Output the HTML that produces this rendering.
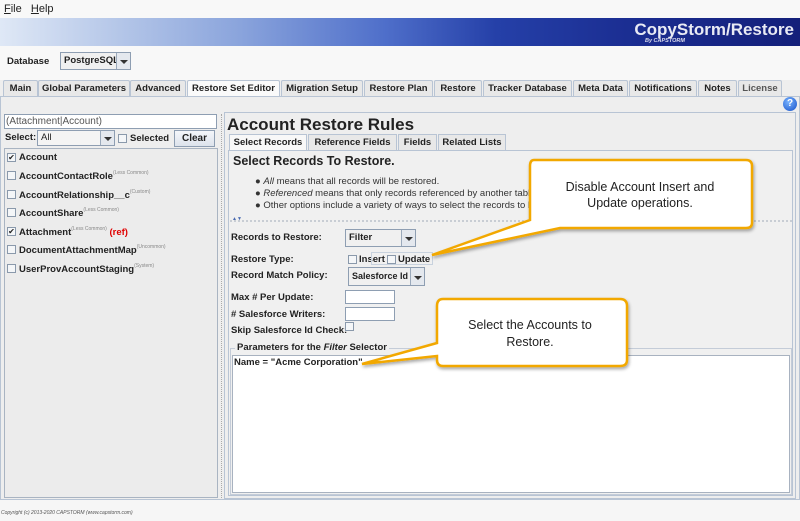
<!DOCTYPE html>
<html><head><meta charset="utf-8"><style>
*{box-sizing:border-box;margin:0;padding:0}
body{width:800px;height:521px;overflow:hidden;background:#eeeeee;font-family:"Liberation Sans",sans-serif;font-size:11px;color:#222;position:relative}
.a{position:absolute;white-space:nowrap}
.b{font-weight:bold}
.tab{position:absolute;top:80px;height:16px;border:1px solid #b8c4d4;border-bottom:none;background:#e8e8e8;font-weight:bold;font-size:9.5px;text-align:center;line-height:15px;border-radius:2px 2px 0 0;white-space:nowrap;overflow:hidden}
.st{position:absolute;top:134px;height:16px;border:1px solid #b8c4d4;border-bottom:none;background:#e8e8e8;font-weight:bold;font-size:9.5px;text-align:center;line-height:15px;white-space:nowrap}
.cb{position:absolute;width:9px;height:9px;border:1px solid #8a99ab;background:#f4f6f8}
.combo{position:absolute;border:1px solid #8e9eb2;background:#f0f0f0;font-weight:bold;font-size:9.5px;padding-left:3px;white-space:nowrap;overflow:hidden}
.arr{position:absolute;right:0;top:0;bottom:0;width:14px;border-left:1px solid #9aa9bb;background:#e4e8ee}
.arr:after{content:"";position:absolute;left:3px;top:45%;border:4px solid transparent;border-top:4px solid #333}
.li{position:absolute;left:19px;font-weight:bold;font-size:9.5px;white-space:nowrap}
.li sup{font-size:5px;font-weight:normal;color:#888;vertical-align:5px}
.fld{position:absolute;width:50px;height:14px;border:1px solid #8e9eb2;background:#fff}
.lb{position:absolute;font-weight:bold;font-size:9.5px;white-space:nowrap}
</style></head><body>
<div class="a" style="left:0;top:0;width:800px;height:18px;background:#f8f8f8"></div>
<div class="a" style="left:4px;top:3px;font-size:11px"><u>F</u>ile &nbsp;&nbsp;<u>H</u>elp</div>
<div class="a" style="left:0;top:18px;width:800px;height:28px;background:linear-gradient(90deg,#dfe8f6 0%,#b4c6e8 15%,#8aa4dc 30%,#4f6fca 48%,#2540a8 62%,#1a2c90 80%,#14207a 100%)"></div>
<div class="a b" style="right:6px;top:20px;font-size:17px;color:#e8eaf4">CopyStorm/Restore</div>
<div class="a b" style="left:645px;top:38px;font-size:5.5px;color:#dde;font-style:italic">By CAPSTORM</div>
<div class="a" style="left:0;top:46px;width:800px;height:34px;background:#f8f8f8"></div>
<div class="lb" style="left:7px;top:56px">Database</div>
<div class="combo" style="left:60px;top:52px;width:71px;height:18px;line-height:16px">PostgreSQL<div class="arr"></div></div>
<div class="tab" style="left:3px;width:35px">Main</div>
<div class="tab" style="left:38px;width:92px">Global Parameters</div>
<div class="tab" style="left:130px;width:56px">Advanced</div>
<div class="tab" style="left:187px;width:93px;background:#fafafa">Restore Set Editor</div>
<div class="tab" style="left:281px;width:82px">Migration Setup</div>
<div class="tab" style="left:364px;width:69px">Restore Plan</div>
<div class="tab" style="left:434px;width:48px">Restore</div>
<div class="tab" style="left:483px;width:89px">Tracker Database</div>
<div class="tab" style="left:573px;width:55px">Meta Data</div>
<div class="tab" style="left:629px;width:68px">Notifications</div>
<div class="tab" style="left:698px;width:39px">Notes</div>
<div class="tab" style="left:738px;width:44px;color:#555">License</div>
<div class="a" style="left:0;top:96px;width:800px;height:404px;border:1px solid #b8c4d4;background:#eeeeee"></div>
<div class="a" style="left:783px;top:97px;width:14px;height:14px;border-radius:50%;background:radial-gradient(circle at 40% 35%,#7ab4ff,#1550c8);color:#fff;font-size:10px;font-weight:bold;text-align:center;line-height:14px">?</div>
<!-- left panel -->
<div class="a" style="left:4px;top:114px;width:213px;height:15px;border:1px solid #8e9eb2;background:#fff;font-size:10px;color:#555;padding-left:1px;line-height:13px">(Attachment|Account)</div>
<div class="lb" style="left:5px;top:132px">Select:</div>
<div class="combo" style="left:37px;top:130px;width:78px;height:16px;font-weight:normal;background:#f4f4f4;line-height:14px">All<div class="arr"></div></div>
<div class="cb" style="left:118px;top:134px"></div>
<div class="lb" style="left:130px;top:133px">Selected</div>
<div class="a b" style="left:174px;top:130px;width:41px;height:17px;border:1px solid #8e9eb2;background:linear-gradient(#f4f6fa,#dde3ec);text-align:center;line-height:15px;font-size:10px">Clear</div>
<div class="a" style="left:4px;top:148px;width:214px;height:350px;border:1px solid #a9b4c2;background:#ececec"></div>
<div class="cb" style="left:7px;top:153px;font-size:8px;line-height:7px;text-align:center">✔</div><div class="li" style="top:152px">Account</div>
<div class="cb" style="left:7px;top:171px"></div><div class="li" style="top:170px">AccountContactRole<sup>(Less Common)</sup></div>
<div class="cb" style="left:7px;top:190px"></div><div class="li" style="top:189px">AccountRelationship__c<sup>(Custom)</sup></div>
<div class="cb" style="left:7px;top:208px"></div><div class="li" style="top:207px">AccountShare<sup>(Less Common)</sup></div>
<div class="cb" style="left:7px;top:227px;font-size:8px;line-height:7px;text-align:center">✔</div><div class="li" style="top:226px">Attachment<sup>(Less Common)</sup> <span style="color:#e00000">(ref)</span></div>
<div class="cb" style="left:7px;top:245px"></div><div class="li" style="top:244px">DocumentAttachmentMap<sup>(Uncommon)</sup></div>
<div class="cb" style="left:7px;top:264px"></div><div class="li" style="top:263px">UserProvAccountStaging<sup>(System)</sup></div>
<div class="a" style="left:221px;top:114px;width:1px;height:384px;border-left:1px dotted #aaa"></div>
<!-- right panel -->
<div class="a" style="left:224px;top:112px;width:572px;height:387px;border:1px solid #b8c4d4"></div>
<div class="a b" style="left:227px;top:115px;font-size:17px">Account Restore Rules</div>
<div class="st" style="left:229px;width:78px;background:#f8f8f8">Select Records</div>
<div class="st" style="left:308px;width:89px">Reference Fields</div>
<div class="st" style="left:398px;width:39px">Fields</div>
<div class="st" style="left:438px;width:68px">Related Lists</div>
<div class="a" style="left:228px;top:150px;width:565px;height:346px;border:1px solid #b8c4d4;background:#f0f0f0"></div>
<div class="a b" style="left:233px;top:154px;font-size:12.5px">Select Records To Restore.</div>
<div class="a" style="left:255px;top:176px;font-size:9.5px;line-height:12px;color:#333">● <i>All</i> means that all records will be restored.<br>● <i>Referenced</i> means that only records referenced by another table will be restored.<br>● Other options include a variety of ways to select the records to be restored.</div>
<div class="a" style="left:230px;top:220px;width:562px;height:3px;border-top:2px dotted #c8cdd4"></div>
<div class="a" style="left:232px;top:216px;font-size:5px;color:#4a6ab0">▲▼</div>
<div class="lb" style="left:231px;top:232px">Records to Restore:</div>
<div class="combo" style="left:345px;top:229px;width:71px;height:18px;line-height:16px">Filter<div class="arr"></div></div>
<div class="lb" style="left:231px;top:254px">Restore Type:</div>
<div class="cb" style="left:348px;top:255px"></div><div class="lb" style="left:359px;top:254px">Insert</div>
<div class="a" style="left:371px;top:252px;width:62px;height:13px;border:1px solid #c8d2de"></div>
<div class="cb" style="left:387px;top:255px"></div><div class="lb" style="left:398px;top:254px">Update</div>
<div class="lb" style="left:231px;top:270px">Record Match Policy:</div>
<div class="combo" style="left:348px;top:267px;width:77px;height:19px;line-height:17px;font-size:9px">Salesforce Id<div class="arr"></div></div>
<div class="lb" style="left:231px;top:292px">Max # Per Update:</div>
<div class="fld" style="left:345px;top:290px"></div>
<div class="lb" style="left:231px;top:309px"># Salesforce Writers:</div>
<div class="fld" style="left:345px;top:307px"></div>
<div class="lb" style="left:231px;top:325px">Skip Salesforce Id Check:</div>
<div class="cb" style="left:345px;top:322px"></div>
<div class="a" style="left:230px;top:348px;width:562px;height:147px;border:1px solid #c4ccd8"></div>
<div class="lb" style="left:235px;top:342px;background:#f0f0f0;padding:0 2px">Parameters for the <i>Filter</i> Selector</div>
<div class="a" style="left:232px;top:355px;width:558px;height:138px;border:1px solid #a8b2c0;background:#fff"></div>
<div class="lb" style="left:234px;top:357px">Name = "Acme Corporation"</div>
<div class="a" style="left:0;top:500px;width:800px;height:21px;background:#f6f6f6"></div>
<div class="a" style="left:1px;top:510px;font-size:5px;color:#555;font-style:italic">Copyright (c) 2013-2020 CAPSTORM (www.capstorm.com)</div>
<!-- callouts -->
<svg class="a" style="left:0;top:0" width="800" height="521">
<defs><filter id="sh"><feDropShadow dx="1" dy="2" stdDeviation="1.5" flood-opacity="0.35"/></filter></defs>
<path d="M534,160 H746 Q752,160 752,166 V223 Q752,228 746,228 H560 L432,255 L530,220 V166 Q530,160 534,160 Z" fill="#fff" stroke="#f2a800" stroke-width="2.5" filter="url(#sh)"/>
<path d="M443,299 H620 Q627,299 627,306 V360 Q627,366 620,366 H443 Q437,366 437,360 V356 L362,364 L437,343 V306 Q437,299 443,299 Z" fill="#fff" stroke="#f2a800" stroke-width="2.5" filter="url(#sh)"/>
<text x="640" y="191" font-family="Liberation Sans" font-size="12.5" text-anchor="middle" fill="#222">Disable Account Insert and</text>
<text x="640" y="207" font-family="Liberation Sans" font-size="12.5" text-anchor="middle" fill="#222">Update operations.</text>
<text x="530" y="329" font-family="Liberation Sans" font-size="12.5" text-anchor="middle" fill="#222">Select the Accounts to</text>
<text x="530" y="346" font-family="Liberation Sans" font-size="12.5" text-anchor="middle" fill="#222">Restore.</text>
</svg>
</body></html>
